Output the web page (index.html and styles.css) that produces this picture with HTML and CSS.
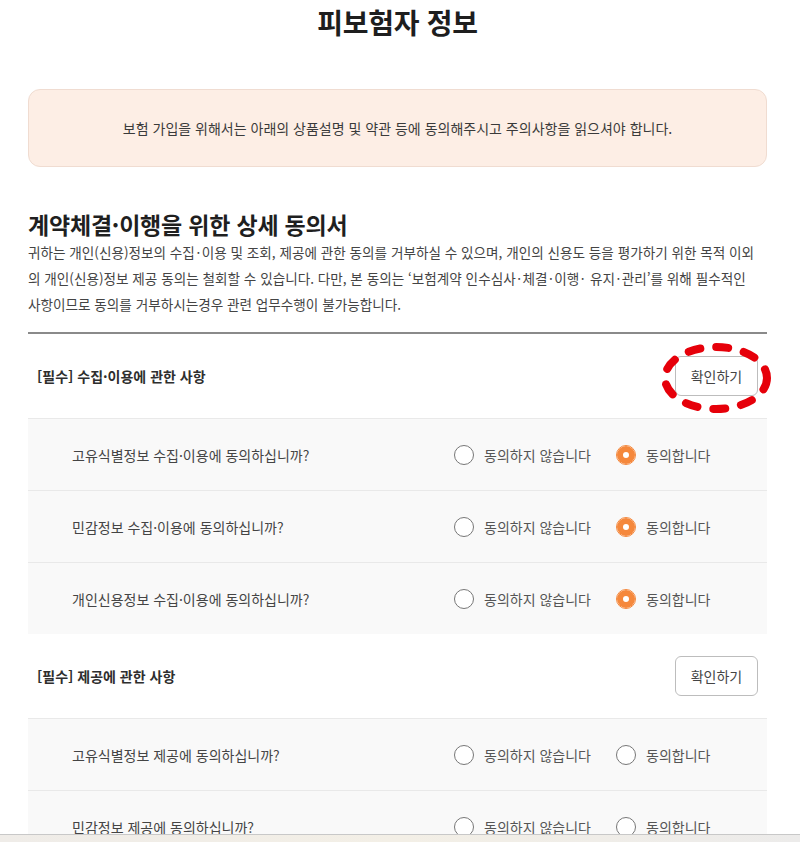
FILE: index.html
```html
<!DOCTYPE html>
<html lang="ko">
<head>
<meta charset="utf-8">
<title>피보험자 정보</title>
<link rel="stylesheet" href="styles.css">
</head>
<body>
<div class="page">
  <h1 class="page-title">피보험자 정보</h1>
  <div class="notice">보험 가입을 위해서는 아래의 상품설명 및 약관 등에 동의해주시고 주의사항을 읽으셔야 합니다.</div>

  <h2 class="doc-title">계약체결·이행을 위한 상세 동의서</h2>
  <p class="doc-desc">귀하는 개인(신용)정보의 수집<span class="dot">·</span>이용 및 조회, 제공에 관한 동의를 거부하실 수 있으며, 개인의 신용도 등을 평가하기 위한 목적 이외<br>의 개인(신용)정보 제공 동의는 철회할 수 있습니다. 다만, 본 동의는 ‘보험계약 인수심사<span class="dot">·</span>체결<span class="dot">·</span>이행<span class="dot">·</span> 유지<span class="dot">·</span>관리’를 위해 필수적인<br>사항이므로 동의를 거부하시는경우 관련 업무수행이 불가능합니다.</p>

  <div class="consent">
    <div class="sec-head">
      <span class="sec-title">[필수] 수집·이용에 관한 사항</span>
      <span class="btn-wrap">
        <button class="btn">확인하기</button>
        <svg class="mark" width="120" height="80" viewBox="0 0 120 80"><ellipse cx="60" cy="40" rx="51" ry="31" fill="none" stroke="#e6000a" stroke-width="8" stroke-linecap="round" stroke-dasharray="12 16"/></svg>
      </span>
    </div>
    <div class="row">
      <span class="q">고유식별정보 수집·이용에 동의하십니까?</span>
      <span class="opt"><i class="radio"></i>동의하지 않습니다</span>
      <span class="opt"><i class="radio on"></i>동의합니다</span>
    </div>
    <div class="row">
      <span class="q">민감정보 수집·이용에 동의하십니까?</span>
      <span class="opt"><i class="radio"></i>동의하지 않습니다</span>
      <span class="opt"><i class="radio on"></i>동의합니다</span>
    </div>
    <div class="row">
      <span class="q">개인신용정보 수집·이용에 동의하십니까?</span>
      <span class="opt"><i class="radio"></i>동의하지 않습니다</span>
      <span class="opt"><i class="radio on"></i>동의합니다</span>
    </div>

    <div class="sec-head">
      <span class="sec-title">[필수] 제공에 관한 사항</span>
      <span class="btn-wrap"><button class="btn">확인하기</button></span>
    </div>
    <div class="row">
      <span class="q">고유식별정보 제공에 동의하십니까?</span>
      <span class="opt"><i class="radio"></i>동의하지 않습니다</span>
      <span class="opt"><i class="radio"></i>동의합니다</span>
    </div>
    <div class="row">
      <span class="q">민감정보 제공에 동의하십니까?</span>
      <span class="opt"><i class="radio"></i>동의하지 않습니다</span>
      <span class="opt"><i class="radio"></i>동의합니다</span>
    </div>
  </div>
</div>
<div class="browser-strip"></div>
</body>
</html>
```
FILE: styles.css
```css
html, body {
  margin: 0;
  padding: 0;
  background: #fff;
}
body {
  font-family: "Noto Sans CJK KR", "Noto Sans", sans-serif;
  color: #333;
  overflow: hidden;
}
.page {
  width: 739px;
  margin-left: 28px;
}
.page-title {
  margin: 0;
  height: 44px;
  line-height: 44px;
  font-size: 28px;
  font-weight: 700;
  text-align: center;
  color: #1e1e1e;
  letter-spacing: -0.3px;
}
.notice {
  margin-top: 45px;
  height: 76px;
  border: 1px solid #f0dcd1;
  border-radius: 12px;
  background: #fdeee5;
  display: flex;
  align-items: center;
  justify-content: center;
  font-size: 14px;
  color: #3a3a3a;
}
.doc-title {
  margin: 42px 0 0;
  font-size: 23px;
  line-height: 30px;
  font-weight: 700;
  color: #1f1f1f;
  letter-spacing: -0.2px;
}
.doc-desc {
  margin: 0;
  font-size: 13.6px;
  line-height: 26px;
  color: #444;
  white-space: nowrap;
}
.dot {
  margin: 0 1.5px;
}
.consent {
  margin-top: 15px;
  border-top: 2px solid #8a8a8a;
}
.sec-head {
  height: 84px;
  display: flex;
  align-items: center;
  justify-content: space-between;
  padding: 0 9px;
  background: #fff;
}
.sec-title {
  font-size: 14px;
  font-weight: 700;
  color: #2e2e2e;
}
.btn-wrap {
  position: relative;
  display: inline-flex;
}
.btn {
  width: 83px;
  height: 40px;
  border: 1px solid #bdbdbd;
  border-radius: 6px;
  background: #fff;
  font-family: inherit;
  font-size: 14px;
  color: #444;
  padding: 0;
  cursor: pointer;
}
.mark {
  position: absolute;
  left: -19px;
  top: -18px;
  pointer-events: none;
}
.row {
  height: 71px;
  border-top: 1px solid #e9e9e9;
  background: #f9f9f9;
  display: grid;
  grid-template-columns: 1fr 162px 151px;
  align-items: center;
  padding-left: 44px;
}
.q {
  font-size: 14px;
  color: #444;
}
.opt {
  display: flex;
  align-items: center;
  gap: 10px;
  font-size: 14px;
  color: #555;
}
.radio {
  width: 18px;
  height: 18px;
  border: 1px solid #777;
  border-radius: 50%;
  background: #fff;
  box-sizing: content-box;
  flex: none;
}
.radio.on {
  border-color: #f5883c;
  background: #fff;
  box-shadow: inset 0 0 0 6px #f5883c;
}
.browser-strip {
  position: fixed;
  left: 0;
  right: 0;
  bottom: 0;
  height: 7px;
  border-top: 1px solid #c8c8c8;
  background: linear-gradient(90deg, #efece8, #f3efe6 50%, #ecebea);
}
```
